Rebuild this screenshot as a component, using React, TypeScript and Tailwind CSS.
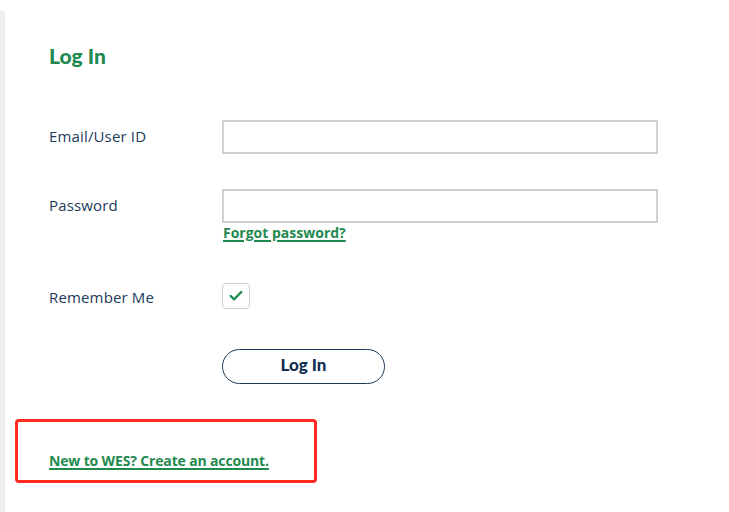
import { Check } from "lucide-react";

const label = "w-[173px] shrink-0 text-[15px] tracking-[0.15px] text-[#1d3a5a]";
const input =
  "h-[34px] w-[436px] border-2 border-[#cfcfcf] bg-white outline-none";

export default function App() {
  return (
    <div className="flex h-[512px] w-[729px] bg-white font-['Open_Sans',sans-serif]">
      <div className="mt-[11px] w-[5px] shrink-0 bg-[#efefef]" />
      <div className="flex flex-1 flex-col pl-[44px] pt-[42px]">
        <h1 className="font-['Lato',sans-serif] text-[21px] font-black leading-[28px] text-[#1f8a4f]">
          Log In
        </h1>

        <div className="mt-[50px] flex items-center">
          <span className={`${label} -mt-[2px]`}>Email/User ID</span>
          <input className={input} />
        </div>

        <div className="mt-[35px] flex items-start">
          <span className={`${label} pt-[5px]`}>Password</span>
          <div className="flex flex-col">
            <input type="password" className={input} />
            <a
              href="#"
              className="ml-[1px] text-[14px] font-bold leading-[20px] text-[#1f8a4f] underline decoration-2 underline-offset-2"
            >
              Forgot password?
            </a>
          </div>
        </div>

        <div className="mt-[40px] flex items-center">
          <span className={`${label} mt-[3px]`}>Remember Me</span>
          <div className="flex h-[26px] w-[28px] items-center justify-center rounded-[4px] border border-[#cfcfcf]">
            <Check size={16} strokeWidth={3.5} className="text-[#1f8a4f]" />
          </div>
        </div>

        <div className="mt-[40px] pl-[173px]">
          <button className="h-[35px] w-[163px] rounded-full border border-[#1d3a5a] pb-[3px] font-['Lato',sans-serif] text-[17px] font-black text-[#0f2f52]">
            Log In
          </button>
        </div>

        <div className="-ml-[34px] mt-[35px] flex h-[64px] w-[302px] items-end rounded-[4px] border-[3px] border-[#ff2a1f] pb-[9px] pl-[31px]">
          <a
            href="#"
            className="text-[14px] font-bold leading-[20px] tracking-[-0.15px] text-[#1f8a4f] underline decoration-2 underline-offset-2"
          >
            New to WES? Create an account.
          </a>
        </div>
      </div>
    </div>
  );
}
